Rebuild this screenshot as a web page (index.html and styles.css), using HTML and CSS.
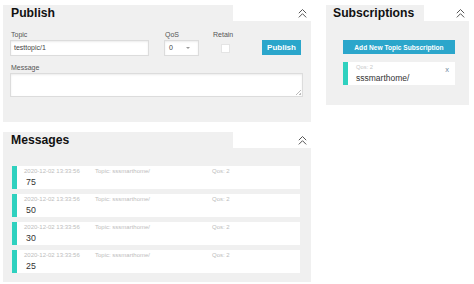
FILE: index.html
```html
<!DOCTYPE html>
<html lang="en">
<head>
<meta charset="utf-8">
<title>MQTT Client</title>
<link rel="stylesheet" href="styles.css">
</head>
<body>
<div class="page">
  <div class="col-left">
    <section class="panel">
      <div class="panel-head">
        <h2 class="tab tab-wide">Publish</h2>
        <span class="toggle"><svg width="9" height="11" viewBox="0 0 9 11"><path d="M0.8 5.2 L4.5 1.5 L8.2 5.2 M0.8 9.4 L4.5 5.7 L8.2 9.4" fill="none" stroke="#555" stroke-width="1"/></svg></span>
      </div>
      <div class="panel-body publish-body">
        <div class="form-row">
          <label class="field field-topic">
            <span class="label">Topic</span>
            <span class="input">testtopic/1</span>
          </label>
          <label class="field field-qos">
            <span class="label">QoS</span>
            <span class="select">0<span class="caret"></span></span>
          </label>
          <label class="field field-retain">
            <span class="label">Retain</span>
            <span class="checkbox"></span>
          </label>
          <button class="btn btn-publish">Publish</button>
        </div>
        <span class="label label-msg">Message</span>
        <span class="textarea"><span class="grip"></span></span>
      </div>
    </section>

    <section class="panel panel-messages">
      <div class="panel-head">
        <h2 class="tab tab-wide">Messages</h2>
        <span class="toggle"><svg width="9" height="11" viewBox="0 0 9 11"><path d="M0.8 5.2 L4.5 1.5 L8.2 5.2 M0.8 9.4 L4.5 5.7 L8.2 9.4" fill="none" stroke="#555" stroke-width="1"/></svg></span>
      </div>
      <div class="panel-body messages-body">
        <div class="msg">
          <div class="meta"><span>2020-12-02 13:33:56</span><span>Topic: sssmarthome/</span><span>Qos: 2</span></div>
          <div class="value">75</div>
        </div>
        <div class="msg">
          <div class="meta"><span>2020-12-02 13:33:56</span><span>Topic: sssmarthome/</span><span>Qos: 2</span></div>
          <div class="value">50</div>
        </div>
        <div class="msg">
          <div class="meta"><span>2020-12-02 13:33:56</span><span>Topic: sssmarthome/</span><span>Qos: 2</span></div>
          <div class="value">30</div>
        </div>
        <div class="msg">
          <div class="meta"><span>2020-12-02 13:33:56</span><span>Topic: sssmarthome/</span><span>Qos: 2</span></div>
          <div class="value">25</div>
        </div>
      </div>
    </section>
  </div>

  <div class="col-right">
    <section class="panel">
      <div class="panel-head">
        <h2 class="tab tab-narrow">Subscriptions</h2>
        <span class="toggle"><svg width="9" height="11" viewBox="0 0 9 11"><path d="M0.8 5.2 L4.5 1.5 L8.2 5.2 M0.8 9.4 L4.5 5.7 L8.2 9.4" fill="none" stroke="#555" stroke-width="1"/></svg></span>
      </div>
      <div class="panel-body subs-body">
        <button class="btn btn-add">Add New Topic Subscription</button>
        <div class="sub">
          <div class="sub-text">
            <div class="sub-qos">Qos: 2</div>
            <div class="sub-topic">sssmarthome/</div>
          </div>
          <span class="sub-close">x</span>
        </div>
      </div>
    </section>
  </div>
</div>
</body>
</html>
```

FILE: styles.css
```css
* { box-sizing: border-box; }
html, body { margin: 0; padding: 0; background: #fff; }
body {
  font-family: "Liberation Sans", Arial, sans-serif;
  color: #333;
}
.page {
  display: flex;
  gap: 15px;
  padding: 5px 0 0 3px;
}
.col-left { width: 308px; display: flex; flex-direction: column; gap: 10px; }
.col-right { width: 143px; }

.panel { display: flex; flex-direction: column; }
.panel-head { display: flex; height: 16px; }
.tab {
  margin: 0;
  background: #f0f0f0;
  font-size: 12.2px;
  font-weight: bold;
  line-height: 17px;
  padding-left: 8px;
  color: #111;
}
.tab-wide { width: 230px; }
.tab-narrow { width: 98px; padding-left: 7px; }
.toggle {
  flex: 1;
  display: flex;
  justify-content: flex-end;
  align-items: center;
  padding-right: 4px;
  padding-top: 1px;
}
.toggle svg { display: block; }
.panel-body { background: #f0f0f0; }

/* publish */
.publish-body { padding: 8px 8px 25px 7px; display: flex; flex-direction: column; }
.form-row { display: flex; align-items: flex-start; }
.field { display: flex; flex-direction: column; }
.label {
  display: block;
  font-size: 7px;
  line-height: 11px;
  color: #555;
  padding-left: 1px;
}
.field-topic { width: 139px; }
.field-qos { width: 35px; margin-left: 15px; }
.field-retain { width: 22px; margin-left: 13px; }
.input, .select, .textarea {
  display: block;
  background: #fff;
  border: 1px solid #dcdcdc;
  box-shadow: inset 0 1px 2px rgba(0,0,0,0.08);
}
.input {
  height: 16px;
  font-size: 7px;
  line-height: 14px;
  padding-left: 3px;
  color: #444;
}
.select {
  position: relative;
  height: 16px;
  font-size: 7px;
  line-height: 14px;
  padding-left: 4px;
  color: #444;
}
.caret {
  position: absolute;
  right: 8px;
  top: 6px;
  border-left: 2px solid transparent;
  border-right: 2px solid transparent;
  border-top: 2px solid #999;
}
.checkbox {
  display: block;
  width: 9px;
  height: 9px;
  margin: 4px 0 0 9px;
  background: #fff;
  border: 1px solid #e4e4e4;
}
.btn {
  border: 0;
  background: #2ba6cb;
  color: #fff;
  font-family: inherit;
  font-weight: bold;
  padding: 0;
  cursor: pointer;
}
.btn-publish {
  margin: 11px 0 0 28px;
  width: 39px;
  height: 15px;
  font-size: 8px;
}
.label-msg { margin-top: 6px; }
.textarea {
  position: relative;
  height: 24px;
  width: 293px;
}
.grip {
  position: absolute;
  right: 1px;
  bottom: 1px;
  width: 5px;
  height: 5px;
  background: linear-gradient(135deg, transparent 45%, #bbb 45%, #bbb 55%, transparent 55%, transparent 75%, #bbb 75%);
}

/* messages */
.messages-body {
  padding: 18px 11px 9px 9px;
  display: flex;
  flex-direction: column;
  gap: 5px;
}
.msg {
  height: 23px;
  background: #fff;
  border-left: 5px solid #2fd1bf;
  padding-left: 7px;
}
.meta {
  display: grid;
  grid-template-columns: 71px 117px auto;
  font-size: 6px;
  line-height: 9px;
  color: #bdbdbd;
  padding-top: 1px;
}
.value {
  font-size: 8.8px;
  line-height: 12px;
  padding-left: 2px;
  color: #333;
}

/* subscriptions */
.subs-body { padding: 19px 14px 20px 17px; }
.btn-add {
  display: block;
  width: 112px;
  height: 14px;
  font-size: 6.6px;
}
.sub {
  margin-top: 8px;
  width: 112px;
  height: 23px;
  background: #fff;
  border-left: 5px solid #2fd1bf;
  display: flex;
  padding-left: 8px;
}
.sub-text { flex: 1; }
.sub-qos {
  font-size: 5.8px;
  line-height: 9px;
  color: #c8c8c8;
  padding-top: 1px;
}
.sub-topic {
  font-size: 8.5px;
  line-height: 12px;
  color: #333;
}
.sub-close {
  font-size: 7.5px;
  line-height: 8px;
  color: #6f8aa0;
  padding: 4px 6px 0 0;
}
```
